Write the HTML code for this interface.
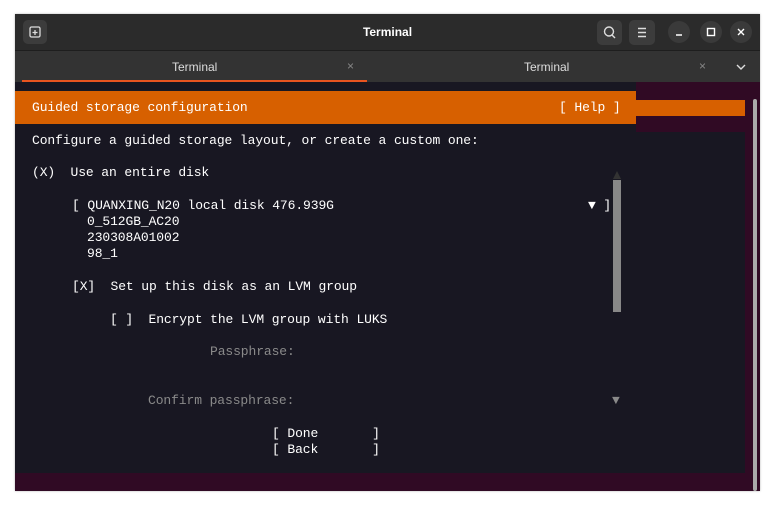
<!DOCTYPE html>
<html><head><style>
*{margin:0;padding:0;box-sizing:border-box}
body{width:775px;height:513px;background:#fff;position:relative;overflow:hidden;font-family:"Liberation Sans",sans-serif}
.win{position:absolute;left:15px;top:14px;width:745px;height:477px;background:#300a24;box-shadow:0 0 2px rgba(0,0,0,.3)}
.title{position:absolute;left:0;top:0;width:745px;height:36px;background:#2b2b2b;color:#fff;font-weight:bold;font-size:12px;text-align:center;line-height:36px}
.tabs{position:absolute;left:0;top:36px;width:745px;height:32px;background:#333;border-top:1px solid #1e1e1e;color:#ddd;font-size:12px}
.btn{position:absolute;background:#3c3c3c;border-radius:5px}
.circ{position:absolute;width:22px;height:22px;border-radius:11px;background:#3a3a3a;top:7px;color:#fff;font-size:11px;text-align:center;line-height:22px}
.term{position:absolute;left:0;top:68px;width:730px;height:391px;background:#181722}
.pur{position:absolute;left:621px;top:68px;width:109px;height:50px;background:#300a24}
.t{position:absolute;font-family:"Liberation Mono",monospace;font-size:13px;letter-spacing:-0.1px;white-space:pre;color:#fff;line-height:16px}
.g{color:#8a8a8a}
</style></head><body>
<div class="win">
 <div class="title">Terminal
  <div class="btn" style="left:8px;top:6px;width:24px;height:24px"><svg width="24" height="24"><rect x="7" y="7" width="10" height="10" rx="1.5" fill="none" stroke="#ddd" stroke-width="1.3"/><path d="M12 10v5M9.5 12.5h5" stroke="#ddd" stroke-width="1.3"/></svg></div>
  <div class="btn" style="left:582px;top:6px;width:25px;height:25px"><svg width="25" height="25"><circle cx="12" cy="11.5" r="4.5" fill="none" stroke="#ddd" stroke-width="1.4"/><path d="M15 15l3 3" stroke="#ddd" stroke-width="1.4"/></svg></div>
  <div class="btn" style="left:614px;top:6px;width:26px;height:25px"><svg width="26" height="25"><path d="M9 8.5h8M9 12.5h8M9 16.5h8" stroke="#ddd" stroke-width="1.4"/></svg></div>
  <div class="circ" style="left:653px"><svg width="22" height="22"><path d="M8 14h6" stroke="#fff" stroke-width="1.5"/></svg></div>
  <div class="circ" style="left:685px"><svg width="22" height="22"><rect x="7.5" y="7.5" width="7" height="7" fill="none" stroke="#fff" stroke-width="1.4"/></svg></div>
  <div class="circ" style="left:715px"><svg width="22" height="22"><path d="M8 8l6 6M14 8l-6 6" stroke="#fff" stroke-width="1.4"/></svg></div>
 </div>
 <div class="tabs">
  <div style="position:absolute;left:157px;top:9px">Terminal</div>
  <div style="position:absolute;left:332px;top:8px;color:#888">×</div>
  <div style="position:absolute;left:7px;top:29px;width:345px;height:3px;background:#e95420"></div>
  <div style="position:absolute;left:509px;top:9px">Terminal</div>
  <div style="position:absolute;left:684px;top:8px;color:#888">×</div>
  <svg style="position:absolute;left:720px;top:11px" width="12" height="10"><path d="M2 3l4 4 4-4" fill="none" stroke="#ddd" stroke-width="1.4"/></svg>
 </div>
 <div class="term"></div>
 <div class="pur"></div>
 <div style="position:absolute;left:0;top:77px;width:621px;height:33px;background:#d76000"></div>
 <div style="position:absolute;left:621px;top:86px;width:109px;height:16px;background:#d76000"></div>
 <div style="position:absolute;left:738px;top:85px;width:4px;height:392px;background:#aaa;border-radius:2px"></div>
 <div style="position:absolute;left:598px;top:166px;width:8px;height:132px;background:#888"></div>
 <div style="position:absolute;left:598px;top:157px;width:0;height:0;border-left:4px solid transparent;border-right:4px solid transparent;border-bottom:8px solid #333"></div>
</div>
<div class="t" style="left:32px;top:100px">Guided storage configuration</div>
<div class="t" style="left:559px;top:100px">[ Help ]</div>
<div class="t" style="left:32px;top:133px">Configure a guided storage layout, or create a custom one:</div>
<div class="t" style="left:32px;top:165px">(X)  Use an entire disk</div>
<div class="t" style="left:72px;top:198px">[ QUANXING_N20 local disk 476.939G</div>
<div class="t" style="left:588px;top:198px">▼ ]</div>
<div class="t" style="left:87px;top:214px">0_512GB_AC20</div>
<div class="t" style="left:87px;top:230px">230308A01002</div>
<div class="t" style="left:87px;top:246px">98_1</div>
<div class="t" style="left:72px;top:279px">[X]  Set up this disk as an LVM group</div>
<div class="t" style="left:110px;top:312px">[ ]  Encrypt the LVM group with LUKS</div>
<div class="t g" style="left:210px;top:344px">Passphrase:</div>
<div class="t g" style="left:148px;top:393px">Confirm passphrase:</div>
<div class="t g" style="left:612px;top:393px">▼</div>
<div class="t" style="left:272px;top:426px">[ Done       ]</div>
<div class="t" style="left:272px;top:442px">[ Back       ]</div>
</body></html>
